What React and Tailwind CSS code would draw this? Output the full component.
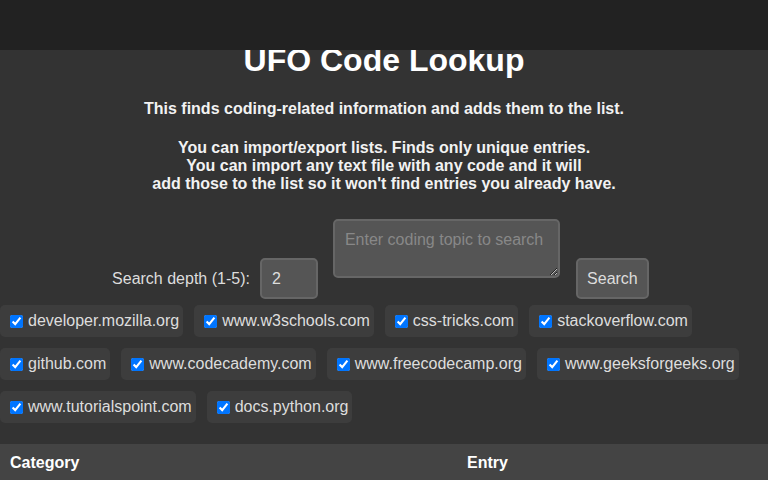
import React from "react";

const sites = [
  "developer.mozilla.org",
  "www.w3schools.com",
  "css-tricks.com",
  "stackoverflow.com",
  "github.com",
  "www.codecademy.com",
  "www.freecodecamp.org",
  "www.geeksforgeeks.org",
  "www.tutorialspoint.com",
  "docs.python.org",
];

export default function App() {
  return (
    <div className="relative min-h-[480px] bg-[#333] text-white font-['Liberation_Sans',Arial,sans-serif] text-[16px] leading-[normal] overflow-hidden">
      {/* fixed top bar */}
      <div className="fixed top-0 left-0 right-0 h-[50px] bg-[#222] z-10" />

      <div className="pt-[20px]">
        <h1 className="mt-[22px] mb-[21px] text-center text-[32px] font-bold leading-[normal]">
          UFO Code Lookup
        </h1>
        <p className="text-center font-bold text-[#f2f2f2]">
          This finds coding-related information and adds them to the list.
        </p>
        <p className="mt-[21px] mb-[26px] text-center font-bold text-[#f2f2f2]">
          You can import/export lists. Finds only unique entries.
          <br />
          You can import any text file with any code and it will
          <br />
          add those to the list so it won't find entries you already have.
        </p>

        {/* search controls */}
        <div className="flex items-end justify-center pr-[7px]">
          <label className="mb-[11px] text-[#ddd]">Search depth (1-5):</label>
          <input
            type="text"
            defaultValue="2"
            className="ml-[10px] w-[58px] h-[41px] px-[10px] rounded-[5px] border-2 border-[#666] bg-[#555] text-[#ddd] text-[16px] outline-none"
          />
          <textarea
            placeholder="Enter coding topic to search"
            className="ml-[15px] mb-[21px] w-[227px] h-[59px] px-[10px] py-[10px] rounded-[5px] border-2 border-[#666] bg-[#555] text-[#ddd] text-[16px] placeholder:text-[#888] outline-none"
          />
          <button className="ml-[16px] w-[73px] h-[41px] rounded-[5px] border-2 border-[#666] bg-[#555] text-[#ddd] text-[16px]">
            Search
          </button>
        </div>

        {/* site filters */}
        <div className="mt-[6px] flex flex-wrap gap-[11px]">
          {sites.map((s) => (
            <label
              key={s}
              className="flex items-center h-[32px] pl-[10px] pr-[4px] rounded-[5px] bg-[#3d3d3d] text-[#ddd]"
            >
              <input type="checkbox" defaultChecked className="w-[13px] h-[13px] mr-[5px]" />
              {s}
            </label>
          ))}
        </div>

        {/* results table */}
        <div className="mt-[21px] grid grid-cols-[457px_1fr] bg-[#444] font-bold">
          <div className="px-[10px] py-[10px] h-[60px]">Category</div>
          <div className="px-[10px] py-[10px]">Entry</div>
        </div>
      </div>
    </div>
  );
}
